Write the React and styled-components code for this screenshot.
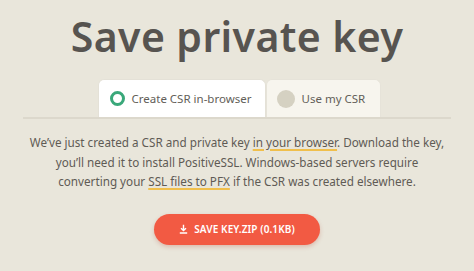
import styled, { createGlobalStyle } from 'styled-components'

const colors = {
	page: '#e9e6db',
	ink: '#575450',
	text: '#5f5b55',
	line: '#dcd8cc',
	green: '#3aa87a',
	coral: '#f25a43',
	mark: '#f0bf4c',
}

const GlobalStyle = createGlobalStyle`
	html, body {
		margin: 0;
		padding: 0;
		background: ${colors.page};
	}
	body {
		font-family: 'Noto Sans', 'Open Sans', sans-serif;
		color: ${colors.text};
	}
`

export default function App() {
	return (
		<>
			<GlobalStyle />
			<Page>
				<Title>Save private key</Title>
				<Tabs>
					<Tab $active>
						<Radio $active />
						Create CSR in-browser
					</Tab>
					<Tab>
						<Radio />
						Use my CSR
					</Tab>
				</Tabs>
				<Copy>
					We’ve just created a CSR and private key <Mark>in your browser</Mark>. Download the key,
					<br />
					you’ll need it to install PositiveSSL. Windows-based servers require
					<br />
					converting your <Mark>SSL files to PFX</Mark> if the CSR was created elsewhere.
				</Copy>
				<SaveButton>
					<svg width="9" height="10" viewBox="0 0 9 10" fill="none">
						<path d="M4.5 0.8v5.6M2 4.2l2.5 2.4L7 4.2M0.8 9h7.4" stroke="#fff" strokeWidth="1.4" />
					</svg>
					Save key.zip (0.1KB)
				</SaveButton>
			</Page>
		</>
	)
}

const Page = styled.div`
	width: 474px;
	height: 271px;
	display: flex;
	flex-direction: column;
	align-items: center;
	box-sizing: border-box;
	padding-top: 11px;
	overflow: hidden;
`

const Title = styled.h1`
	margin: 0;
	font-family: 'Noto Sans', sans-serif;
	font-weight: 600;
	font-size: 41px;
	line-height: 50px;
	letter-spacing: 0.4px;
	color: ${colors.ink};
`

const Tabs = styled.div`
	margin-top: 18px;
	width: 428px;
	display: flex;
	justify-content: center;
	border-bottom: 2px solid ${colors.line};
	padding-left: 4px;
	box-sizing: border-box;
`

const Tab = styled.div`
	display: flex;
	align-items: center;
	gap: 7px;
	height: 38px;
	box-sizing: border-box;
	padding: 0 12px 0 10px;
	width: ${(p) => (p.$active ? '168px' : '115px')};
	background: ${(p) => (p.$active ? '#ffffff' : '#f7f5ee')};
	border: 1px solid ${(p) => (p.$active ? '#e4e1d7' : '#e6e3d9')};
	border-bottom: none;
	border-radius: 6px 6px 0 0;
	font-size: 11.5px;
	color: #625e58;
	white-space: nowrap;
`

const Radio = styled.span`
	flex: none;
	box-sizing: border-box;
	width: ${(p) => (p.$active ? '15px' : '18px')};
	height: ${(p) => (p.$active ? '15px' : '18px')};
	margin-left: ${(p) => (p.$active ? '1px' : '0')};
	border-radius: 50%;
	border: ${(p) => (p.$active ? `3.5px solid ${colors.green}` : 'none')};
	background: ${(p) => (p.$active ? '#fff' : '#d5d1c2')};
`

const Copy = styled.p`
	margin: 14px 0 0;
	text-align: center;
	font-size: 11.7px;
	line-height: 19.5px;
	color: ${colors.text};
	white-space: nowrap;
`

const Mark = styled.span`
	text-decoration: underline;
	text-decoration-color: ${colors.mark};
	text-decoration-thickness: 2px;
	text-underline-offset: 2px;
`

const SaveButton = styled.button`
	margin-top: 22px;
	width: 166px;
	height: 31px;
	border: none;
	border-radius: 16px;
	background: ${colors.coral};
	box-shadow: 0 2px 4px rgba(180, 60, 40, 0.25);
	color: #fff;
	font-family: 'Noto Sans', sans-serif;
	font-weight: 600;
	font-size: 10px;
	text-transform: uppercase;
	letter-spacing: 0.1px;
	display: flex;
	align-items: center;
	justify-content: center;
	gap: 6px;
	cursor: pointer;
`
